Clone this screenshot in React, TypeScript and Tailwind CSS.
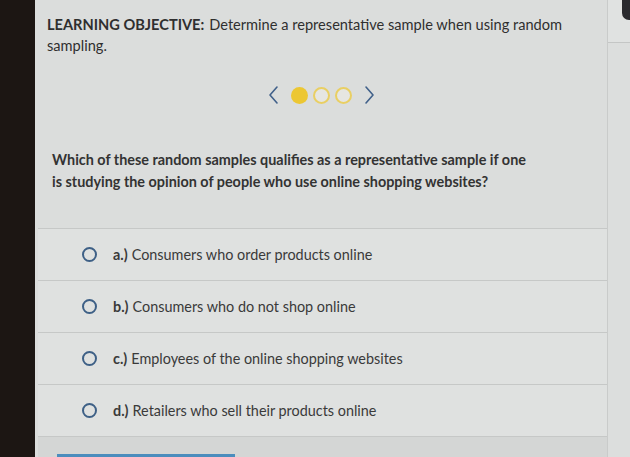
import React from 'react';

const options = [
    { key: 'a.)', text: 'Consumers who order products online' },
    { key: 'b.)', text: 'Consumers who do not shop online' },
    { key: 'c.)', text: 'Employees of the online shopping websites' },
    { key: 'd.)', text: 'Retailers who sell their products online' },
];

const Chevron: React.FC<{ dir: 'left' | 'right' }> = ({ dir }) => (
    <svg width="12" height="20" viewBox="0 0 12 20" fill="none" stroke="#41618a" strokeWidth={1.6} strokeLinecap="round" strokeLinejoin="round">
        {dir === 'left' ? <path d="M9 2L2 10l7 8" /> : <path d="M3 2l7 8-7 8" />}
    </svg>
);

export default function App() {
    return (
        <div className="w-[630px] h-[457px] flex overflow-hidden bg-[#dadcdb] text-[#333] font-['Lato','Open_Sans',sans-serif]">
            <div className="w-[35px] shrink-0 bg-[#1c1613]" />

            <div className="w-[573px] shrink-0 flex flex-col bg-[#dbdddc] border-r border-[#c9cbca]">
                <div className="pl-[12px] pr-4 pt-[14px] text-[14.6px] leading-[21px] text-[#2f2f2f]">
                    <div>
                        <span className="font-bold mr-[5px]">LEARNING OBJECTIVE:</span>Determine a representative sample when using random
                    </div>
                    <div>sampling.</div>
                </div>

                <div className="flex items-center justify-center gap-[5px] mt-[29px]">
                    <span className="mr-[6px]"><Chevron dir="left" /></span>
                    <span className="w-[17px] h-[17px] rounded-full bg-[#ecc733]" />
                    <span className="w-[17px] h-[17px] rounded-full border-2 border-[#e9cf63] bg-[#e6e6e2]" />
                    <span className="w-[17px] h-[17px] rounded-full border-2 border-[#e9cf63] bg-[#e6e6e2]" />
                    <span className="ml-[6px]"><Chevron dir="right" /></span>
                </div>

                <div className="ml-[17px] mt-[44px] text-[14.4px] leading-[22px] font-bold text-[#333]">
                    Which of these random samples qualifies as a representative sample if one
                    <br />
                    is studying the opinion of people who use online shopping websites?
                </div>

                <div className="mt-[35px] ml-[3px] flex flex-col">
                    {options.map((o) => (
                        <div key={o.key} className="h-[52px] flex items-center border-t border-[#c6c8c7] bg-[#dfe1e0]">
                            <span className="ml-[44px] w-[15px] h-[15px] rounded-full border-2 border-[#3e6086] shrink-0" />
                            <span className="ml-[16px] text-[14.4px] text-[#3a3a3a]">
                                <span className="font-bold mr-[4px]">{o.key}</span>{o.text}
                            </span>
                        </div>
                    ))}
                    <div className="h-[22px] border-t border-[#c6c8c7] bg-[#d4d6d5] flex items-end">
                        <div className="ml-[19px] w-[178px] h-[4px] bg-[#4b8dbd]" />
                    </div>
                </div>
            </div>

            <div className="relative flex-1 flex flex-col bg-[#dcdedd]">
                <div className="h-[43px] border-b border-[#c4c6c5] bg-[#e0e2e1]" />
                <div className="absolute right-[-6px] top-[-8px] w-[14px] h-[28px] rounded-full bg-[#2a2a2e]" />
            </div>
        </div>
    );
}
